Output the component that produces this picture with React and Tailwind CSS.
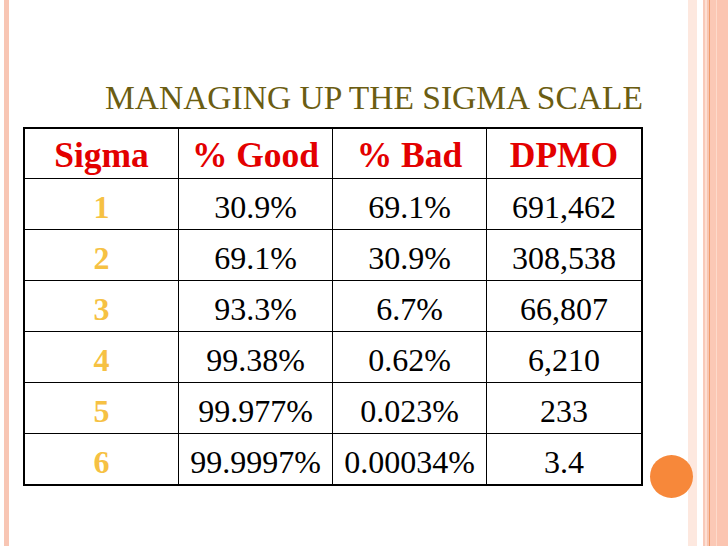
import React from 'react';

const rows = [
  ['1', '30.9%', '69.1%', '691,462'],
  ['2', '69.1%', '30.9%', '308,538'],
  ['3', '93.3%', '6.7%', '66,807'],
  ['4', '99.38%', '0.62%', '6,210'],
  ['5', '99.977%', '0.023%', '233'],
  ['6', '99.9997%', '0.00034%', '3.4'],
];

const headers = ['Sigma', '% Good', '% Bad', 'DPMO'];

const App = () => {
  return (
    <div className="relative w-[728px] h-[546px] bg-white flex overflow-hidden [font-family:'Liberation_Serif']">
      {/* left stripe */}
      <div className="ml-[4px] w-[5px] h-full bg-[#f8c6b4]" />

      {/* slide body */}
      <div className="flex-1 flex flex-col pl-[14px]">
        <h1 className="pt-[81px] pl-[82px] h-[114px] text-[33.5px] leading-none text-[#6b5d12] [font-family:'Liberation_Serif']">
          MANAGING UP THE SIGMA SCALE
        </h1>
        <div className="mt-[13px] w-[620px] border-2 border-black grid grid-cols-[154px_154px_154px_154px]">
          {headers.map((h, i) => (
            <div
              key={h}
              className={`h-[50px] border-b border-black flex items-center justify-center pt-[5px] text-[35.5px] font-bold text-[#e30000] [font-family:'Liberation_Serif'] ${i < 3 ? 'border-r' : ''}`}
            >
              {h}
            </div>
          ))}
          {rows.map((row, r) =>
            row.map((cell, i) => (
              <div
                key={`${r}-${i}`}
                className={`${r < 5 ? 'h-[51px] border-b' : 'h-[50px]'} border-black flex items-center justify-center pt-[6px] text-[32px] [font-family:'Liberation_Serif'] ${i < 3 ? 'border-r' : ''} ${i === 0 ? 'font-bold text-[#f6c143]' : 'text-black'}`}
              >
                {cell}
              </div>
            ))
          )}
        </div>
      </div>

      {/* right stripes */}
      <div className="flex h-full">
        <div className="w-[9px] bg-[#fde8df]" />
        <div className="w-[6px] bg-white" />
        <div className="w-[2px] bg-[#f9c9b8]" />
        <div className="w-[2px] bg-[#fde0d4]" />
        <div className="w-[2px] bg-[#f9c6b3]" />
        <div className="w-[1px] bg-[#ee9b6b]" />
        <div className="w-[6px] bg-[#fbc8b5]" />
        <div className="w-[1px] bg-[#fddacb]" />
        <div className="w-[11px] bg-[#fbc5b1]" />
      </div>

      {/* orange dot */}
      <div className="absolute left-[650px] top-[455px] w-[43px] h-[43px] rounded-full bg-[#f7883a]" />
    </div>
  );
};

export default App;
